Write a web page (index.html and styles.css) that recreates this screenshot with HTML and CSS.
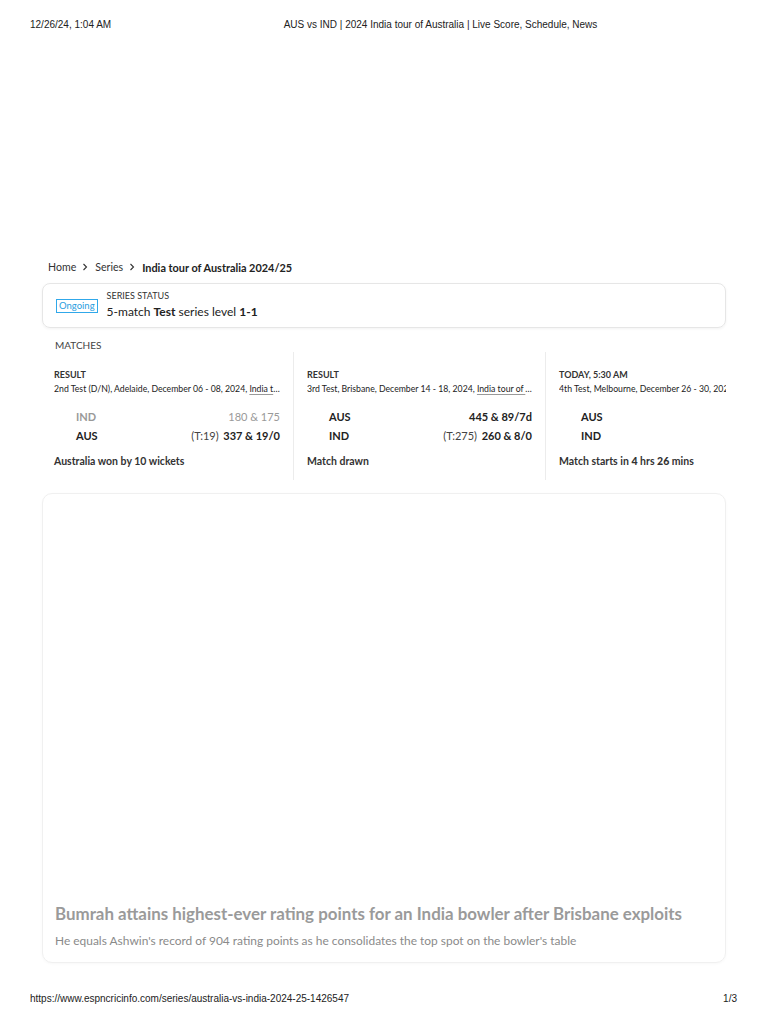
FILE: index.html
```html
<!DOCTYPE html>
<html lang="en">
<head>
<meta charset="utf-8">
<title>AUS vs IND | 2024 India tour of Australia | Live Score, Schedule, News</title>
<link rel="stylesheet" href="styles.css">
</head>
<body>
<div class="sheet">
  <header class="print-head">
    <span class="print-date">12/26/24, 1:04 AM</span>
    <span class="print-title">AUS vs IND | 2024 India tour of Australia | Live Score, Schedule, News</span>
    <span></span>
  </header>

  <main class="page">
    <nav class="crumbs">
      <a href="#">Home</a>
      <svg class="chev" viewBox="0 0 8 8" width="8" height="8"><path d="M2.5 1l3 3-3 3" fill="none" stroke="#333" stroke-width="1.1"/></svg>
      <a href="#">Series</a>
      <svg class="chev" viewBox="0 0 8 8" width="8" height="8"><path d="M2.5 1l3 3-3 3" fill="none" stroke="#333" stroke-width="1.1"/></svg>
      <strong>India tour of Australia 2024/25</strong>
    </nav>

    <section class="status-card">
      <span class="badge">Ongoing</span>
      <div class="status-text">
        <div class="status-label">SERIES STATUS</div>
        <div class="status-line">5-match <b>Test</b> series level <b>1-1</b></div>
      </div>
    </section>

    <section class="matches">
      <h2 class="matches-title">MATCHES</h2>
      <div class="match-strip">
        <article class="match">
          <div class="match-state">RESULT</div>
          <div class="match-desc">2nd Test (D/N), Adelaide, December 06 - 08, 2024, <u>India tour of Australia</u></div>
          <div class="teams">
            <div class="team lost"><span class="tname">IND</span><span class="score">180 &amp; 175</span></div>
            <div class="team"><span class="tname">AUS</span><span class="score"><span class="target">(T:19)</span> 337 &amp; 19/0</span></div>
          </div>
          <div class="match-note">Australia won by 10 wickets</div>
        </article>
        <article class="match">
          <div class="match-state">RESULT</div>
          <div class="match-desc">3rd Test, Brisbane, December 14 - 18, 2024, <u>India tour of Australia</u></div>
          <div class="teams">
            <div class="team"><span class="tname">AUS</span><span class="score">445 &amp; 89/7d</span></div>
            <div class="team"><span class="tname">IND</span><span class="score"><span class="target">(T:275)</span> 260 &amp; 8/0</span></div>
          </div>
          <div class="match-note">Match drawn</div>
        </article>
        <article class="match">
          <div class="match-state">TODAY, 5:30 AM</div>
          <div class="match-desc clip">4th Test, Melbourne, December 26 - 30, 2024, <u>India tour of Australia</u></div>
          <div class="teams">
            <div class="team"><span class="tname">AUS</span><span class="score"></span></div>
            <div class="team"><span class="tname">IND</span><span class="score"></span></div>
          </div>
          <div class="match-note">Match starts in <b>4</b> hrs <b>26</b> mins</div>
        </article>
      </div>
    </section>

    <section class="story">
      <div class="story-media"></div>
      <h3 class="story-title">Bumrah attains highest-ever rating points for an India bowler after Brisbane exploits</h3>
      <p class="story-sub">He equals Ashwin's record of 904 rating points as he consolidates the top spot on the bowler's table</p>
    </section>
  </main>

  <footer class="print-foot">
    <span>https://www.espncricinfo.com/series/australia-vs-india-2024-25-1426547</span>
    <span>1/3</span>
  </footer>
</div>
</body>
</html>
```

FILE: styles.css
```css
* { box-sizing: border-box; }

html, body {
  margin: 0;
  padding: 0;
  background: #fff;
}

.sheet {
  width: 768px;
  height: 1024px;
  display: flex;
  flex-direction: column;
  font-family: Lato, "Noto Sans", sans-serif;
  color: #222;
}

/* print header / footer */
.print-head,
.print-foot {
  font-family: "Liberation Sans", Arial, sans-serif;
  font-size: 10px;
  color: #222;
  padding: 0 31px 0 30px;
}

.print-head {
  display: grid;
  grid-template-columns: 1fr auto 1fr;
  padding-top: 19px;
  height: 255px;
  align-items: start;
}

.print-title { transform: translateX(57px); }

.print-foot {
  display: flex;
  justify-content: space-between;
  margin-top: auto;
  padding-bottom: 20px;
}

/* page body */
.page {
  padding: 0 42px;
  display: flex;
  flex-direction: column;
}

.crumbs {
  display: flex;
  align-items: center;
  gap: 5px;
  padding-left: 6px;
  font-size: 10.6px;
  height: 24px;
}

.crumbs a {
  color: #333;
  text-decoration: none;
}

.crumbs strong {
  font-weight: 700;
  color: #222;
  font-size: 10.9px;
}

.chev { margin-right: 1px; }

/* series status */
.status-card {
  margin-top: 4px;
  height: 45px;
  border: 1px solid #e6e6e6;
  border-radius: 8px;
  box-shadow: 0 1px 3px rgba(0, 0, 0, 0.05);
  display: flex;
  align-items: center;
  padding-left: 13px;
  gap: 9px;
}

.badge {
  border: 1px solid #30a8ea;
  color: #2a9ee0;
  font-size: 9.5px;
  line-height: 12px;
  padding: 0 2px;
}

.status-label {
  font-size: 9px;
  color: #333;
  line-height: 12px;
}

.status-line {
  font-size: 12px;
  line-height: 20px;
  color: #222;
}

.status-line b { font-weight: 700; }

/* matches */
.matches-title {
  margin: 0;
  padding: 11px 0 0 13px;
  font-size: 10px;
  font-weight: 400;
  color: #444;
  line-height: 13px;
}

.match-strip {
  display: flex;
  overflow: hidden;
  height: 128px;
}

.match {
  flex: 0 0 252px;
  padding: 17px 13px 0 12px;
  border-right: 1px solid #ececec;
  min-width: 0;
}

.match + .match { padding-left: 13px; }

.match-state {
  font-size: 9px;
  font-weight: 700;
  color: #333;
  line-height: 12px;
}

.match-desc {
  margin-top: 2px;
  font-size: 8.7px;
  color: #222;
  line-height: 12px;
  white-space: nowrap;
  overflow: hidden;
  text-overflow: ellipsis;
}

.match-desc.clip { text-overflow: clip; }

.match-desc u {
  text-decoration-color: #999;
  text-underline-offset: 2px;
}

.teams {
  margin-top: 14px;
  padding-left: 22px;
  display: flex;
  flex-direction: column;
  gap: 4px;
}

.team {
  display: flex;
  justify-content: space-between;
  font-size: 11px;
  font-weight: 700;
  line-height: 15px;
  color: #222;
}

.team.lost { color: #999; font-weight: 700; }
.team.lost .score { font-weight: 400; }

.target {
  font-weight: 400;
  color: #444;
  margin-right: 2px;
}

.match-note {
  margin-top: 11px;
  font-size: 10.5px;
  font-weight: 700;
  color: #333;
  line-height: 14px;
}

.match-note b { font-weight: 900; }

/* story card */
.story {
  margin-top: 13px;
  height: 470px;
  border: 1px solid #f0f0f0;
  border-radius: 10px;
  box-shadow: 0 1px 3px rgba(0, 0, 0, 0.03);
  display: flex;
  flex-direction: column;
  padding: 0 12px 14px;
}

.story-media { flex: 1; }

.story-title {
  margin: 0;
  font-size: 16.9px;
  font-weight: 700;
  color: #9a9a9a;
  line-height: 21px;
}

.story-sub {
  margin: 9px 0 0;
  font-size: 11.95px;
  color: #8a8a8a;
  line-height: 15px;
}
```
